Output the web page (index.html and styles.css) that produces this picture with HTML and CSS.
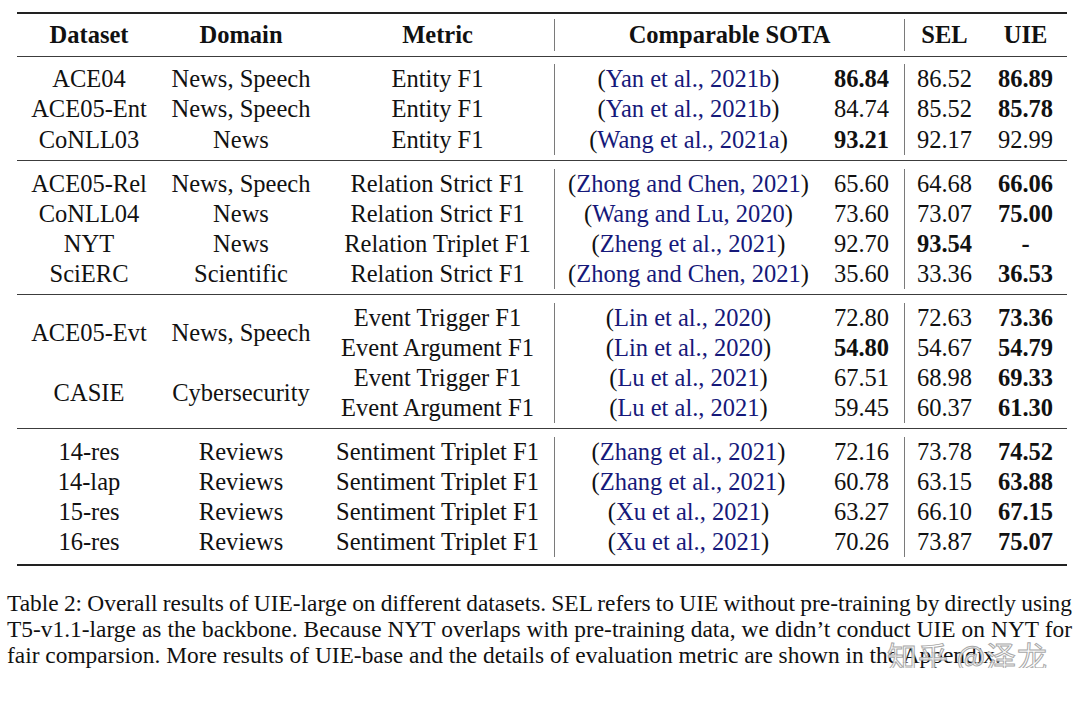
FILE: index.html
```html
<!DOCTYPE html>
<html>
<head>
<meta charset="utf-8">
<title>Table 2</title>
<link rel="stylesheet" href="styles.css">
</head>
<body>
<div class="page">
  <div class="tbl">
    <div class="rule heavy"></div>
    <div class="sec head">
      <div class="c">Dataset</div>
      <div class="c">Domain</div>
      <div class="c">Metric</div>
      <div class="sota">Comparable SOTA</div>
      <div class="sel">SEL</div>
      <div class="c">UIE</div>
    </div>
    <div class="rule"></div>
    <div class="sec first">
      <div class="c">ACE04</div><div class="c">News, Speech</div><div class="c">Entity F1</div>
      <div class="cite">(<span class="ref">Yan et al., 2021b</span>)</div><div class="num b">86.84</div><div class="sel">86.52</div><div class="c b">86.89</div>

      <div class="c">ACE05-Ent</div><div class="c">News, Speech</div><div class="c">Entity F1</div>
      <div class="cite">(<span class="ref">Yan et al., 2021b</span>)</div><div class="num">84.74</div><div class="sel">85.52</div><div class="c b">85.78</div>

      <div class="c">CoNLL03</div><div class="c">News</div><div class="c">Entity F1</div>
      <div class="cite">(<span class="ref">Wang et al., 2021a</span>)</div><div class="num b">93.21</div><div class="sel">92.17</div><div class="c">92.99</div>
    </div>
    <div class="rule"></div>
    <div class="sec">
      <div class="c">ACE05-Rel</div><div class="c">News, Speech</div><div class="c">Relation Strict F1</div>
      <div class="cite">(<span class="ref">Zhong and Chen, 2021</span>)</div><div class="num">65.60</div><div class="sel">64.68</div><div class="c b">66.06</div>

      <div class="c">CoNLL04</div><div class="c">News</div><div class="c">Relation Strict F1</div>
      <div class="cite">(<span class="ref">Wang and Lu, 2020</span>)</div><div class="num">73.60</div><div class="sel">73.07</div><div class="c b">75.00</div>

      <div class="c">NYT</div><div class="c">News</div><div class="c">Relation Triplet F1</div>
      <div class="cite">(<span class="ref">Zheng et al., 2021</span>)</div><div class="num">92.70</div><div class="sel b">93.54</div><div class="c b">-</div>

      <div class="c">SciERC</div><div class="c">Scientific</div><div class="c">Relation Strict F1</div>
      <div class="cite">(<span class="ref">Zhong and Chen, 2021</span>)</div><div class="num">35.60</div><div class="sel">33.36</div><div class="c b">36.53</div>
    </div>
    <div class="rule"></div>
    <div class="sec">
      <div class="c span2">ACE05-Evt</div><div class="c span2">News, Speech</div><div class="c">Event Trigger F1</div>
      <div class="cite">(<span class="ref">Lin et al., 2020</span>)</div><div class="num">72.80</div><div class="sel">72.63</div><div class="c b">73.36</div>

      <div class="c">Event Argument F1</div>
      <div class="cite">(<span class="ref">Lin et al., 2020</span>)</div><div class="num b">54.80</div><div class="sel">54.67</div><div class="c b">54.79</div>

      <div class="c span2">CASIE</div><div class="c span2">Cybersecurity</div><div class="c">Event Trigger F1</div>
      <div class="cite">(<span class="ref">Lu et al., 2021</span>)</div><div class="num">67.51</div><div class="sel">68.98</div><div class="c b">69.33</div>

      <div class="c">Event Argument F1</div>
      <div class="cite">(<span class="ref">Lu et al., 2021</span>)</div><div class="num">59.45</div><div class="sel">60.37</div><div class="c b">61.30</div>
    </div>
    <div class="rule"></div>
    <div class="sec last">
      <div class="c">14-res</div><div class="c">Reviews</div><div class="c">Sentiment Triplet F1</div>
      <div class="cite">(<span class="ref">Zhang et al., 2021</span>)</div><div class="num">72.16</div><div class="sel">73.78</div><div class="c b">74.52</div>

      <div class="c">14-lap</div><div class="c">Reviews</div><div class="c">Sentiment Triplet F1</div>
      <div class="cite">(<span class="ref">Zhang et al., 2021</span>)</div><div class="num">60.78</div><div class="sel">63.15</div><div class="c b">63.88</div>

      <div class="c">15-res</div><div class="c">Reviews</div><div class="c">Sentiment Triplet F1</div>
      <div class="cite">(<span class="ref">Xu et al., 2021</span>)</div><div class="num">63.27</div><div class="sel">66.10</div><div class="c b">67.15</div>

      <div class="c">16-res</div><div class="c">Reviews</div><div class="c">Sentiment Triplet F1</div>
      <div class="cite">(<span class="ref">Xu et al., 2021</span>)</div><div class="num">70.26</div><div class="sel">73.87</div><div class="c b">75.07</div>
    </div>
    <div class="rule heavy"></div>
  </div>

  <div class="caption">
    <div class="line full">Table 2: Overall results of UIE-large on different datasets. SEL refers to UIE without pre-training by directly using</div>
    <div class="line full">T5-v1.1-large as the backbone. Because NYT overlaps with pre-training data, we didn’t conduct UIE on NYT for</div>
    <div class="line">fair comparsion. More results of UIE-base and the details of evaluation metric are shown in the Appendix.</div>
    <div class="watermark">知乎 @泽龙</div>
  </div>
</div>
</body>
</html>
```

FILE: styles.css
```css
html, body {
  margin: 0;
  padding: 0;
  background: #ffffff;
}

body {
  font-family: "Liberation Serif", "Times New Roman", serif;
  color: #111111;
}

.page {
  padding: 12px 0 0 0;
}

.tbl {
  width: 1050px;
  margin-left: 17px;
}

.rule {
  height: 1px;
  background: #3c3c3c;
}

.rule.heavy {
  height: 2px;
  background: #222222;
}

.sec {
  display: grid;
  grid-template-columns: 144px 160px 233px 268px 82px 80px 83px;
  font-size: 24.5px;
  line-height: 30px;
  margin: 8px 0 5px;
  white-space: nowrap;
}

.sec.first {
  line-height: 30.3px;
  margin: 7px 0 5px;
}

.sec.last {
  margin: 8px 0 7px;
}

.sec.head {
  font-weight: bold;
  line-height: 32px;
  margin: 5px 0 5px;
}

.c {
  text-align: center;
}

.span2 {
  grid-row: span 2;
  align-self: center;
}

.sota {
  grid-column: span 2;
  text-align: center;
  border-left: 1px solid #7a7a7a;
}

.cite {
  text-align: center;
  border-left: 1px solid #7a7a7a;
}

.ref {
  color: #16197a;
}

.num {
  text-align: right;
  padding-right: 15px;
}

.sel {
  text-align: center;
  border-left: 1px solid #7a7a7a;
}

.b {
  font-weight: bold;
}

.caption {
  position: relative;
  margin: 24px 0 0 7px;
  width: 1065px;
  font-size: 23.4px;
  line-height: 26px;
  white-space: nowrap;
}

.line {
  text-align: left;
}

.line.full {
  text-align: justify;
  text-align-last: justify;
  word-spacing: -1px;
}

.watermark {
  position: absolute;
  left: 880px;
  top: 48px;
  font-family: "Noto Sans CJK SC", sans-serif;
  font-size: 30px;
  line-height: 34px;
  color: rgba(255, 255, 255, 0.85);
  -webkit-text-stroke: 1px #a8a8a8;
  letter-spacing: 1px;
}
```
